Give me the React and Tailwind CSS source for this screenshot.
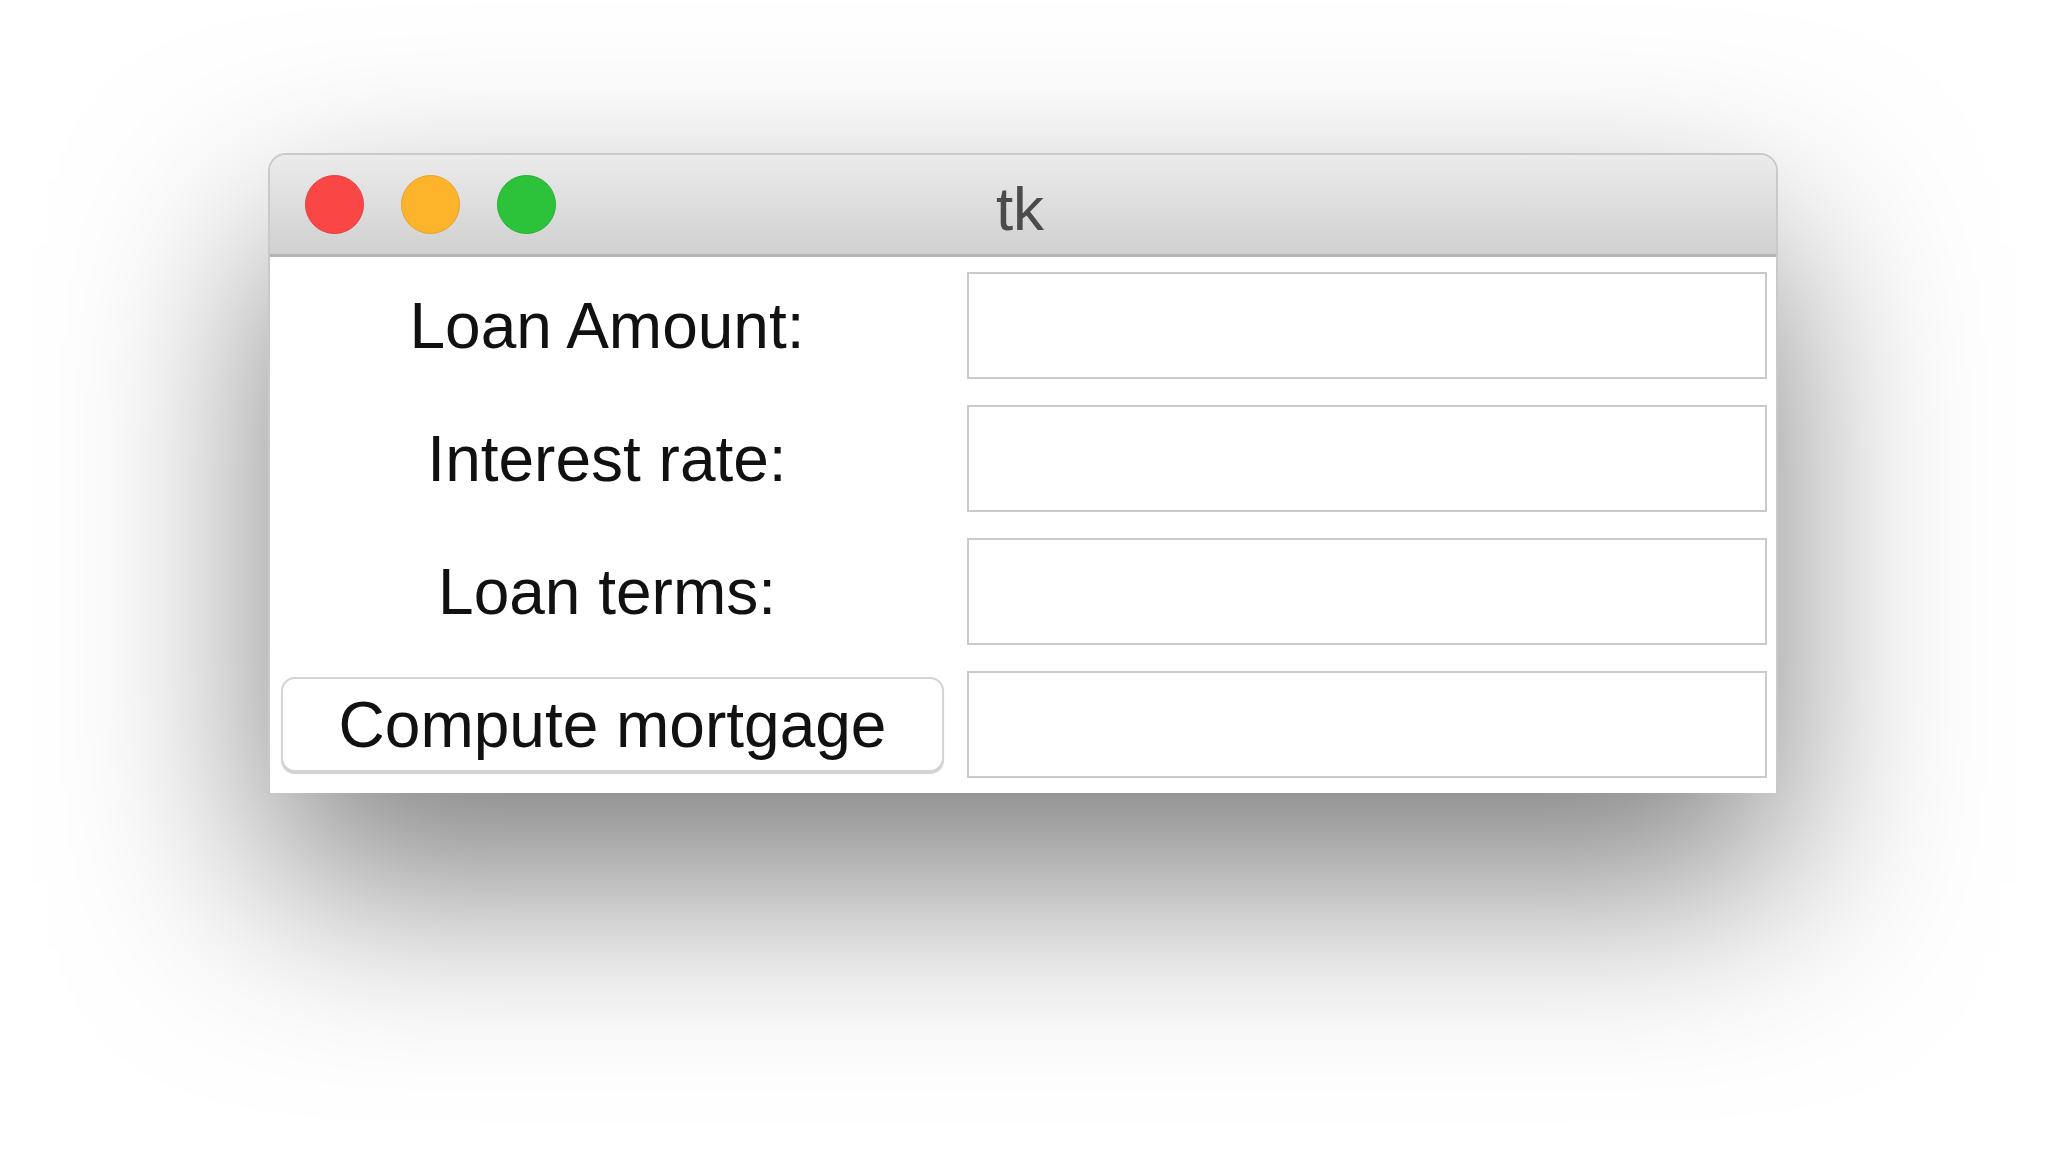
const fields = ["Loan Amount:", "Interest rate:", "Loan terms:"];

const TrafficLights = () => (
  <div className="flex items-center gap-[37px] pl-[35px]">
    <span className="w-[59px] h-[59px] rounded-full bg-[#fb4646] border border-[#e43d3d]" />
    <span className="w-[59px] h-[59px] rounded-full bg-[#fdb42b] border border-[#e7a225]" />
    <span className="w-[59px] h-[59px] rounded-full bg-[#2cc33b] border border-[#25ad33]" />
  </div>
);

const App = () => {
  return (
    <div
      className="w-[2046px] h-[1176px] bg-white overflow-hidden pt-[153px] pl-[268px]"
      style={{ fontFamily: '"Liberation Sans", Arial, sans-serif' }}
    >
      <div className="w-[1510px] h-[640px] flex flex-col bg-white rounded-t-[18px] border-x-2 border-t-2 border-[#c9c9c9] shadow-[0_90px_200px_rgba(0,0,0,0.5)]">
        {/* title bar */}
        <div className="h-[102px] shrink-0 grid grid-cols-[1fr_auto_1fr] items-center rounded-t-[16px] bg-gradient-to-b from-[#ebebeb] to-[#d0d0d0] border-b-[3px] border-[#b4b4b4]">
          <TrafficLights />
          <span className="text-[62px] leading-none text-[#4b4b4b] mt-[8px] -ml-[6px]">tk</span>
          <span />
        </div>

        {/* form */}
        <div className="grid grid-cols-[697px_1fr] gap-y-[26px] pt-[15px] pb-[15px] pr-[9px]">
          {fields.map((label) => (
            <div key={label} className="contents">
              <div className="h-[107px] flex items-center justify-center pl-[13px] pr-[36px]">
                <span className="text-[64px] leading-none text-[#111]">{label}</span>
              </div>
              <input
                type="text"
                className="h-[107px] w-full border-2 border-[#cacaca] bg-white outline-none"
              />
            </div>
          ))}
          <div className="h-[107px] flex items-center pl-[11px] pr-[23px]">
            <button
              type="button"
              className="w-full h-[95px] rounded-[14px] bg-white border-2 border-[#d4d4d4] shadow-[0_2px_1px_rgba(0,0,0,0.18)] text-[64px] leading-none text-[#111]"
            >
              Compute mortgage
            </button>
          </div>
          <input
            type="text"
            className="h-[107px] w-full border-2 border-[#cacaca] bg-white outline-none"
          />
        </div>
      </div>
    </div>
  );
};

export default App;
